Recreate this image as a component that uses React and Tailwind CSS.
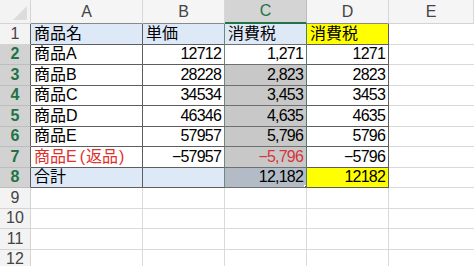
import React from 'react'

const rows = [
  { a: '商品名', b: '単価', c: '消費税', d: '消費税', head: true },
  { a: '商品A', b: '12712', c: '1,271', d: '1271' },
  { a: '商品B', b: '28228', c: '2,823', d: '2823' },
  { a: '商品C', b: '34534', c: '3,453', d: '3453' },
  { a: '商品D', b: '46346', c: '4,635', d: '4635' },
  { a: '商品E', b: '57957', c: '5,796', d: '5796' },
  { a: 'ret', b: '−57957', c: '−5,796', d: '−5796', red: true },
  { a: '合計', b: '', c: '12,182', d: '12182', total: true },
]

const font = { fontFamily: '"Liberation Sans", "Noto Sans CJK JP", sans-serif' }

const Cell = ({ className = '', children }) => (
  <div className={`h-[20.5px] flex items-center overflow-hidden whitespace-nowrap ${className}`}>{children}</div>
)

export default function App() {
  return (
    <div className="w-[474px] h-[266px] overflow-hidden bg-white text-black" style={font}>
      {/* column headers */}
      <div className="flex h-[24px]">
        <div className="w-[31px] bg-[#f3f3f3] border-r border-b border-[#d4d4d4] relative">
          <svg width="14" height="14" className="absolute right-[3px] bottom-[3px]">
            <polygon points="14,0 14,14 0,14" fill="#dcdcdc" />
          </svg>
        </div>
        {['A', 'B', 'C', 'D', 'E'].map((l, i) => (
          <div
            key={l}
            className={`${['w-[112px]', 'w-[82px]', 'w-[82px]', 'w-[82px]', 'flex-1'][i]} flex items-center justify-center text-[16px] border-r ${
              l === 'C'
                ? 'bg-[#d4d4d4] text-[#217346] border-b-2 border-b-[#217346] border-r-[#bdbdbd]'
                : 'bg-[#f5f5f5] text-[#444] border-b border-b-[#8a8a8a] border-r-[#d8d8d8]'
            } ${l === 'E' ? 'border-b-[#d4d4d4]' : ''}`}
          >
            {l}
          </div>
        ))}
      </div>
      {rows.map((r, i) => {
        const n = i + 1
        const sel = n >= 2
        const blue = r.head || r.total
        return (
          <div key={n} className="flex">
            <Cell
              className={`w-[31px] justify-center text-[16px] border-r border-b ${
                sel ? 'bg-[#d2d2d2] text-[#217346] font-bold border-b-[#bdbdbd] border-r-[#5e5e5e]' : 'bg-[#f3f3f3] text-[#444] border-b-[#d4d4d4] border-r-[#5e5e5e]'
              }`}
            >
              {n}
            </Cell>
            <Cell className={`w-[112px] pl-[3px] text-[16px] border-r border-b border-[#5e5e5e] ${blue ? 'bg-[#dde9f6]' : ''} ${r.red ? 'text-[#e0302c]' : ''}`}>
              {r.a === 'ret' ? (
                <>
                  商品E<span className="pl-[3px] pr-[1px]">(</span>返品<span className="pl-[1px]">)</span>
                </>
              ) : (
                r.a
              )}
            </Cell>
            <Cell
              className={`w-[82px] pr-[3px] border-r border-b border-b-[#5e5e5e] border-r-[#6c8a80] ${blue ? 'bg-[#dde9f6]' : ''} ${
                r.head ? 'pl-[3px] text-[16px]' : 'justify-end text-[16px] tracking-[-0.8px]'
              }`}
            >
              {r.b}
            </Cell>
            <Cell
              className={`w-[82px] pr-[3px] border-r border-b border-b-[#6f6f6f] border-r-[#4f7f70] relative ${
                r.head ? 'bg-[#dde9f6] pl-[3px] text-[16px]' : 'justify-end text-[16px] tracking-[-0.8px]'
              } ${r.total ? 'bg-[#b3bcc6]' : n >= 3 ? 'bg-[#c8c8c8]' : ''} ${r.red ? 'text-[#d8343a]' : ''}`}
            >
              {r.c}
              {r.total && <span className="absolute right-[-3px] bottom-[-3px] w-[5px] h-[5px] bg-[#217346] border border-white z-10" />}
            </Cell>
            <Cell
              className={`w-[82px] pr-[3px] border-r border-b border-[#5e5e5e] ${r.head || r.total ? 'bg-[#ffff00]' : ''} ${
                r.head ? 'pl-[3px] text-[16px]' : 'justify-end text-[16px] tracking-[-0.8px]'
              }`}
            >
              {r.d}
            </Cell>
            <Cell className="flex-1 border-b border-[#d9d9d9]" />
          </div>
        )
      })}
      {[9, 10, 11, 12].map((n) => (
        <div key={n} className="flex">
          <Cell className="w-[31px] justify-center text-[16px] bg-[#f3f3f3] text-[#444] border-r border-b border-[#d4d4d4]">{n}</Cell>
          <Cell className="w-[112px] border-r border-b border-[#dadada]" />
          <Cell className="w-[82px] border-r border-b border-[#dadada]" />
          <Cell className="w-[82px] border-r border-b border-[#dadada]" />
          <Cell className="w-[82px] border-r border-b border-[#dadada]" />
          <Cell className="flex-1 border-b border-[#dadada]" />
        </div>
      ))}
    </div>
  )
}
